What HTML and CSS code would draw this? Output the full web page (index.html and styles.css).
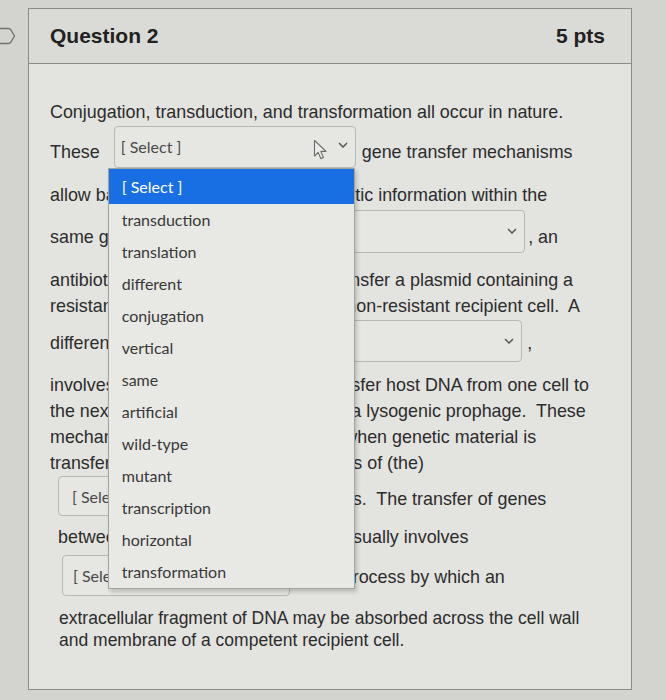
FILE: index.html
```html
<!DOCTYPE html>
<html>
<head>
<meta charset="utf-8">
<link rel="stylesheet" href="styles.css">
</head>
<body>
<div class="page">
  <div class="gutter">
    <svg class="tag" width="16" height="18" viewBox="0 0 16 18"><path d="M-4 1.5 H8.5 Q10 1.5 11 3 L14.5 9 L11 15 Q10 16.5 8.5 16.5 H-4" fill="none" stroke="#72726e" stroke-width="1.4" stroke-linejoin="round"/></svg>
  </div>
  <div class="card">
    <div class="card-head">
      <h2 class="title">Question 2</h2>
      <span class="pts">5 pts</span>
    </div>
    <div class="card-body">
      <p class="line">Conjugation, transduction, and transformation all occur in nature.</p>

      <div class="srow r2">
        <span class="txt">These</span>
        <div class="select s1">
          <span class="val">[ Select ]</span>
          <svg class="chev" width="10" height="6" viewBox="0 0 10 6"><polyline points="1,1 5,5 9,1" fill="none" stroke="#555" stroke-width="1.5"/></svg>
          <svg class="cursor" width="16" height="22" viewBox="0 0 16 22"><path d="M1.5 1.5 L1.5 17 L5.2 13.4 L7.8 19.6 L10.4 18.5 L7.8 12.4 L13 12.4 Z" fill="#ececea" stroke="#6a6a68" stroke-width="1.1" stroke-linejoin="round"/></svg>
          <ul class="menu">
            <li class="sel">[ Select ]</li>
            <li>transduction</li>
            <li>translation</li>
            <li>different</li>
            <li>conjugation</li>
            <li>vertical</li>
            <li>same</li>
            <li>artificial</li>
            <li>wild-type</li>
            <li>mutant</li>
            <li>transcription</li>
            <li>horizontal</li>
            <li>transformation</li>
          </ul>
        </div>
        <span class="txt after1">gene transfer mechanisms</span>
      </div>

      <p class="line l3">allow bacteria to freely exchange genetic information within the</p>

      <div class="srow r4">
        <span class="txt">same generation. In</span>
        <div class="select s2">
          <span class="val"></span>
          <svg class="chev" width="10" height="6" viewBox="0 0 10 6"><polyline points="1,1 5,5 9,1" fill="none" stroke="#555" stroke-width="1.5"/></svg>
        </div>
        <span class="txt after2">, an</span>
      </div>

      <div class="para p5">
        <p class="line">antibiotic-resistant donor cells may transfer a plasmid containing a</p>
        <p class="line">resistance genes for tetracycline to a non-resistant recipient cell.&nbsp; A</p>
      </div>

      <div class="srow r7">
        <span class="txt">different</span>
        <div class="select s3">
          <span class="val"></span>
          <svg class="chev" width="10" height="6" viewBox="0 0 10 6"><polyline points="1,1 5,5 9,1" fill="none" stroke="#555" stroke-width="1.5"/></svg>
        </div>
        <span class="txt after3">,</span>
      </div>

      <div class="para p8">
        <p class="line">involves bacteriophages that may transfer host DNA from one cell to</p>
        <p class="line">the next through the faulty excision of a lysogenic prophage.&nbsp; These</p>
        <p class="line">mechanisms are all forms of transfer when genetic material is</p>
        <p class="line">transferred between two individual cells of (the)</p>
      </div>

      <div class="srow r12">
        <div class="select s4">
          <span class="val">[ Select ]</span>
          <svg class="chev" width="10" height="6" viewBox="0 0 10 6"><polyline points="1,1 5,5 9,1" fill="none" stroke="#555" stroke-width="1.5"/></svg>
        </div>
        <span class="txt after4">species.&nbsp; The transfer of genes</span>
      </div>

      <p class="line l13">between parents and their offspring usually involves</p>

      <div class="srow r14">
        <div class="select s5">
          <span class="val">[ Select ]</span>
          <svg class="chev" width="10" height="6" viewBox="0 0 10 6"><polyline points="1,1 5,5 9,1" fill="none" stroke="#555" stroke-width="1.5"/></svg>
        </div>
        <span class="txt after5">is the process by which an</span>
      </div>

      <div class="para last">
        <p class="line">extracellular fragment of DNA may be absorbed across the cell wall</p>
        <p class="line">and membrane of a competent recipient cell.</p>
      </div>
    </div>
  </div>
</div>
</body>
</html>
```

FILE: styles.css
```css
* { box-sizing: border-box; }
html, body { margin: 0; padding: 0; }
body {
  width: 666px;
  height: 700px;
  overflow: hidden;
  background: #d3d3cf;
  font-family: "Liberation Sans", Arial, sans-serif;
  color: #2c2c2c;
}
.page { display: flex; padding-top: 8px; }
.gutter { width: 28px; flex: none; }
.tag { display: block; margin-top: 19px; }

.card {
  width: 604px;
  height: 682px;
  flex: none;
  border: 1px solid #8c8c88;
  background: #e3e3df;
  display: flex;
  flex-direction: column;
}
.card-head {
  height: 55px;
  flex: none;
  border-bottom: 1px solid #8c8c88;
  background: #dadad6;
  display: flex;
  align-items: center;
  justify-content: space-between;
  padding: 0 26px 0 21px;
}
.title, .pts {
  margin: 0;
  font-size: 21px;
  font-weight: 700;
  color: #222222;
}

.card-body {
  padding: 35px 0 0 21px;
  font-size: 17.9px;
}
.line {
  margin: 0;
  height: 26px;
  line-height: 26px;
  white-space: nowrap;
}
.para { margin: 0; }

.srow {
  display: flex;
  align-items: center;
  white-space: nowrap;
}
.r2 { height: 42px; margin-top: 1px; }
.r2 .txt { padding-top: 10px; }
.l3 { margin-top: 14px; }
.r4 { height: 43px; margin-top: 2px; }
.r4 .txt { padding-top: 11px; }
.p5 { margin-top: 14px; }
.r7 { height: 42px; margin-top: 1px; }
.r7 .txt { padding-top: 4px; }
.p8 { margin-top: 10px; }
.r12 { height: 40px; margin-top: 0; }
.r12 .txt { padding-top: 6px; }
.l13 { margin-top: 8px; padding-left: 8px; }
.r14 { height: 41px; margin-top: 5px; }
.r14 .txt { padding-top: 4px; }
.last { margin-top: 11px; padding-left: 9px; font-size: 17.5px; }
.last .line { height: 22px; line-height: 22px; }

.select {
  height: 100%;
  position: relative;
  display: flex;
  align-items: center;
  border: 1px solid #b7b7b3;
  border-radius: 4px;
  background: #e6e6e2;
  font-family: Lato, "Liberation Sans", sans-serif;
  font-size: 16px;
  color: #4a4a4a;
}
.select .val { flex: none; }
.select .chev { margin-left: auto; margin-right: 7px; flex: none; }

.s1 { width: 242px; margin-left: 14px; padding-left: 6px; }
.s1 .val { margin-top: -2px; }
.s1 .chev { margin-top: -4px; }
.after1 { margin-left: 6px; }
.s2 { width: 312px; margin-left: 5px; }
.s2 .chev { margin-top: -2px; }
.after2 { margin-left: 3px; }
.s3 { width: 403px; margin-left: 5px; }
.after3 { margin-left: 5px; }
.s4 { width: 238px; margin-left: 8px; padding-left: 13px; }
.after4 { margin-left: 5px; }
.s5 { width: 228px; margin-left: 12px; padding-left: 10px; }
.after5 { margin-left: 5px; }

.cursor {
  position: absolute;
  left: 198px;
  top: 12px;
}

.menu {
  position: absolute;
  left: -7px;
  top: 41px;
  width: 247px;
  height: 421px;
  margin: 0;
  padding: 0;
  list-style: none;
  background: #e8e8e4;
  border: 1px solid #a3a39f;
  box-shadow: 2px 3px 4px rgba(0, 0, 0, 0.18);
  z-index: 5;
  font-family: Lato, "Liberation Sans", sans-serif;
  font-size: 16px;
  color: #383838;
}
.menu li {
  height: 32px;
  line-height: 32px;
  padding-left: 13px;
}
.menu li.sel {
  height: 35px;
  line-height: 35px;
  background: #176fe3;
  color: #ffffff;
}
```
